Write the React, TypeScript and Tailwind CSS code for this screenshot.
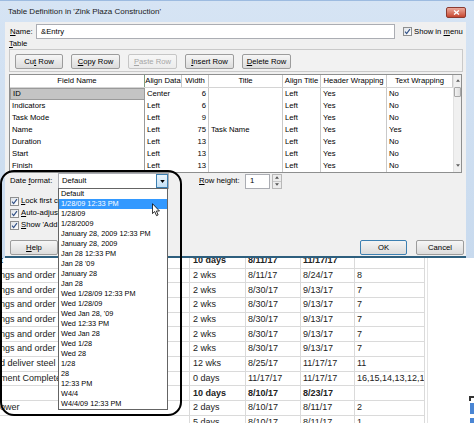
import React from "react";

const ui = "font-['Liberation_Sans',Arial,sans-serif]";

const fields = [
  ["ID", "Center", "6", "", "Left", "Yes", "No"],
  ["Indicators", "Left", "6", "", "Left", "Yes", "No"],
  ["Task Mode", "Left", "9", "", "Left", "Yes", "No"],
  ["Name", "Left", "75", "Task Name", "Left", "Yes", "Yes"],
  ["Duration", "Left", "13", "", "Left", "Yes", "No"],
  ["Start", "Left", "13", "", "Left", "Yes", "No"],
  ["Finish", "Left", "13", "", "Left", "Yes", "No"],
];

const formats = [
  "Default",
  "1/28/09 12:33 PM",
  "1/28/09",
  "1/28/2009",
  "January 28, 2009 12:33 PM",
  "January 28, 2009",
  "Jan 28 12:33 PM",
  "Jan 28 '09",
  "January 28",
  "Jan 28",
  "Wed 1/28/09 12:33 PM",
  "Wed 1/28/09",
  "Wed Jan 28, '09",
  "Wed 12:33 PM",
  "Wed Jan 28",
  "Wed 1/28",
  "Wed 28",
  "1/28",
  "28",
  "12:33 PM",
  "W4/4",
  "W4/4/09 12:33 PM",
];

const bgRows = [
  { name: "t", dur: "10 days", start: "8/11/17", fin: "11/17/17", pred: "", bold: true },
  { name: "ngs and order steel shop drawings", dur: "2 wks", start: "8/11/17", fin: "8/24/17", pred: "8" },
  { name: "ngs and order steel shop drawings", dur: "2 wks", start: "8/30/17", fin: "9/13/17", pred: "7" },
  { name: "ngs and order steel shop drawings", dur: "2 wks", start: "8/30/17", fin: "9/13/17", pred: "7" },
  { name: "ngs and order steel shop drawings", dur: "2 wks", start: "8/30/17", fin: "9/13/17", pred: "7" },
  { name: "ngs and order steel shop drawings", dur: "2 wks", start: "8/30/17", fin: "9/13/17", pred: "7" },
  { name: "ngs and order steel shop drawings", dur: "2 wks", start: "8/30/17", fin: "9/13/17", pred: "7" },
  { name: "d deliver steel", dur: "12 wks", start: "8/25/17", fin: "11/17/17", pred: "11" },
  { name: "ment Complete", dur: "0 days", start: "11/17/17", fin: "11/17/17", pred: "16,15,14,13,12,11" },
  { name: "", dur: "10 days", start: "8/10/17", fin: "8/23/17", pred: "", bold: true, mark: "corner" },
  { name: "ower", dur: "2 days", start: "8/10/17", fin: "8/11/17", pred: "2", mark: "bar" },
  { name: "", dur: "5 days", start: "8/10/17", fin: "8/11/17", pred: "1", mark: "bar" },
];

function U({ children }: { children: React.ReactNode }) {
  return <span className="underline underline-offset-[1px]">{children}</span>;
}

function Btn({
  children,
  w,
  disabled,
  primary,
}: {
  children: React.ReactNode;
  w: string;
  disabled?: boolean;
  primary?: boolean;
}) {
  const tone = disabled
    ? "border-[#c6c6c6] text-[#a6a6a6] from-[#f7f7f7] to-[#ececec]"
    : primary
    ? "border-[#3c7fb1] text-black from-[#f4f4f4] to-[#dcdcdc]"
    : "border-[#9c9c9c] text-black from-[#f6f6f6] to-[#dcdcdc]";
  return (
    <div
      className={`${w} h-[15px] shrink-0 flex items-center justify-center rounded-[2px] border bg-linear-to-b text-[7.7px] ${tone}`}
    >
      <span className="whitespace-pre">{children}</span>
    </div>
  );
}

function Check() {
  return (
    <div className="w-[9px] h-[9px] shrink-0 border border-[#8e8f8f] bg-linear-to-br from-[#dfe3e8] to-white flex items-center justify-center">
      <svg viewBox="0 0 8 8" className="w-[7px] h-[7px]">
        <path d="M1.2 4.2 L3 6.3 L6.8 1.2" fill="none" stroke="#2f4f86" strokeWidth="1.3" />
      </svg>
    </div>
  );
}

export default function App() {
  return (
    <div className={`relative w-[474px] h-[423px] overflow-hidden bg-white text-black leading-none ${ui}`}>
      {/* Project sheet behind the dialog */}
      <div className="pt-[254px] text-[9px] text-[#222]">
        {bgRows.map((r, i) => (
          <div key={i} className={`flex h-[14.7px] ${r.bold ? "font-bold" : ""}`}>
            <div className="w-[190px] shrink-0 border-b border-r border-[#dadada] overflow-hidden whitespace-nowrap flex items-center">
              {r.name}
            </div>
            <div className="w-[56px] shrink-0 border-b border-r border-[#dadada] pl-[3px] flex items-center">{r.dur}</div>
            <div className="w-[55px] shrink-0 border-b border-r border-[#dadada] pl-[2px] flex items-center">{r.start}</div>
            <div className="w-[54px] shrink-0 border-b border-r border-[#dadada] pl-[2px] flex items-center">{r.fin}</div>
            <div className="w-[70px] shrink-0 border-b border-r border-[#dadada] pl-[2px] overflow-hidden whitespace-nowrap flex items-center">
              {r.pred}
            </div>
            <div className="flex-1 ml-[2px] border-l border-[#e4e4e4] flex justify-end">
              {r.mark === "corner" && <div className="self-end w-[5px] h-[5px] border-l-2 border-t-2 border-[#333]" />}
              {r.mark === "bar" && <div className="w-[4px] my-[2px] bg-[#4a86d4]" />}
            </div>
          </div>
        ))}
      </div>

      {/* Table Definition dialog */}
      <div className="absolute left-0 top-0 w-[474px] h-[258px] flex flex-col pl-[5px] pr-[8px] bg-linear-to-b from-[#d6e4f4] to-[#c8daee] border-t border-[#9dbbe0]">
        <div className="h-[21px] shrink-0 flex items-center justify-between">
          <span className="pl-[3px] text-[8px] text-[#1b1b1b]">Table Definition in 'Zink Plaza Construction'</span>
          <div className="w-[20px] h-[11px] mt-[2px] rounded-[2px] border border-[#8b3b30] bg-linear-to-b from-[#eaa99b] to-[#c6452f] flex items-center justify-center">
            <svg viewBox="0 0 8 6" className="w-[7px] h-[5px]">
              <path d="M1 0.5 L7 5.5 M7 0.5 L1 5.5" stroke="white" strokeWidth="1.5" />
            </svg>
          </div>
        </div>

        <div className="flex-1 flex flex-col bg-[#f0f0f0] border-b-2 border-[#2e5f7e] text-[7.7px]">
          {/* Name */}
          <div className="mt-[2px] h-[15px] flex items-center">
            <span className="w-[31px] pl-[5px] shrink-0">
              <U>N</U>ame:
            </span>
            <div className="w-[359px] h-[15px] border border-[#abadb3] bg-white flex items-center pl-[4px]">&amp;Entry</div>
            <div className="ml-[8px] flex items-center gap-[2px]">
              <Check />
              <span>
                Show in <U>m</U>enu
              </span>
            </div>
          </div>

          {/* Table label */}
          <div className="h-[10px] flex items-center pl-[4px]">
            <span>
              <U>T</U>able
            </span>
          </div>

          {/* Row buttons */}
          <div className="ml-[4px] mr-[3px] h-[23px] border border-[#c9c9c9] bg-[#f2f2f2] flex items-start gap-[8px] pl-[5px] pt-[4px]">
            <Btn w="w-[48px]">
              Cu<U>t</U> Row
            </Btn>
            <Btn w="w-[49px]">
              <U>C</U>opy Row
            </Btn>
            <Btn w="w-[49px]" disabled>
              <U>P</U>aste Row
            </Btn>
            <Btn w="w-[49px]">
              <U>I</U>nsert Row
            </Btn>
            <Btn w="w-[49px]">
              <U>D</U>elete Row
            </Btn>
          </div>

          {/* Field grid */}
          <div className="mt-[2px] ml-[4px] w-[453px] h-[99px] shrink-0 border border-[#8e8f8f] bg-white flex">
            <div className="flex-1">
              <div className="grid grid-cols-[135px_37px_27px_74px_38px_66px_66px] h-[13px] border-b border-[#d4d4d4]">
                {["Field Name", "Align Data", "Width", "Title", "Align Title", "Header Wrapping", "Text Wrapping"].map(
                  (h, i) => (
                    <div
                      key={h}
                      className={`flex items-center justify-center border-r whitespace-nowrap overflow-hidden ${
                        i === 0 ? "border-[#7e9c82]" : "border-[#c9c9c9]"
                      }`}
                    >
                      {h}
                    </div>
                  )
                )}
              </div>
              {fields.map((f, r) => (
                <div key={f[0]} className="grid grid-cols-[135px_37px_27px_74px_38px_66px_66px] h-[12px]">
                  <div
                    className={`flex items-center pl-[2px] border-r border-[#9a9a9a] ${
                      r === 0 ? "bg-[#c4c4c4] border border-[#4f7d58]" : ""
                    }`}
                  >
                    {f[0]}
                  </div>
                  <div className="flex items-center pl-[2px]">{f[1]}</div>
                  <div className="flex items-center justify-end pr-[2px] border-r border-[#c9c9c9]">{f[2]}</div>
                  <div className="flex items-center pl-[2px] border-r border-[#c9c9c9]">{f[3]}</div>
                  <div className="flex items-center pl-[2px] border-r border-[#c9c9c9]">{f[4]}</div>
                  <div className="flex items-center pl-[2px] border-r border-[#c9c9c9]">{f[5]}</div>
                  <div className="flex items-center pl-[2px]">{f[6]}</div>
                </div>
              ))}
            </div>
            <div className="w-[8px] shrink-0 bg-[#f0f0f0] border-l border-[#e2e2e2] flex flex-col items-center">
              <svg viewBox="0 0 6 4" className="w-[4px] h-[3px] mt-[4px]">
                <path d="M0 4 L3 0 L6 4 Z" fill="#606060" />
              </svg>
              <div className="mt-[5px] w-[7px] h-[10px] rounded-[1px] border border-[#a7a7a7] bg-linear-to-r from-[#f2f2f2] to-[#dcdcdc]" />
              <div className="flex-1" />
              <svg viewBox="0 0 6 4" className="w-[4px] h-[3px] mb-[5px]">
                <path d="M0 0 L3 4 L6 0 Z" fill="#606060" />
              </svg>
            </div>
          </div>

          {/* Date format / row height */}
          <div className="h-[16px] flex items-center">
            <span className="w-[53px] pl-[5px] shrink-0">
              Date <U>f</U>ormat:
            </span>
            <div className="w-[111px] h-[16px] border border-[#abadb3] bg-white flex items-center">
              <span className="flex-1 pl-[3px]">Default</span>
              <div className="w-[12px] h-[14px] border border-[#3c7fb1] bg-linear-to-b from-[#eaf4fc] to-[#c4e1f6] flex items-center justify-center">
                <svg viewBox="0 0 6 4" className="w-[5px] h-[3px]">
                  <path d="M0 0 L3 4 L6 0 Z" fill="#000" />
                </svg>
              </div>
            </div>
            <span className="ml-[30px] w-[46px] shrink-0">
              <U>R</U>ow height:
            </span>
            <div className="w-[25px] h-[15px] border border-[#abadb3] bg-white flex items-center pl-[4px]">1</div>
            <div className="ml-[2px] w-[10px] h-[15px] flex flex-col border border-[#b8b8b8] bg-[#ececec]">
              <div className="flex-1 flex items-center justify-center border-b border-[#c8c8c8]">
                <svg viewBox="0 0 6 4" className="w-[4px] h-[3px]">
                  <path d="M0 4 L3 0 L6 4 Z" fill="#555" />
                </svg>
              </div>
              <div className="flex-1 flex items-center justify-center">
                <svg viewBox="0 0 6 4" className="w-[4px] h-[3px]">
                  <path d="M0 0 L3 4 L6 0 Z" fill="#555" />
                </svg>
              </div>
            </div>
          </div>

          {/* Options */}
          <div className="mt-[6px] flex flex-col pl-[5px]">
            <div className="h-[12px] flex items-center gap-[2px] whitespace-nowrap">
              <Check />
              <span>
                <U>L</U>ock first column
              </span>
            </div>
            <div className="h-[12px] flex items-center gap-[2px] whitespace-nowrap">
              <Check />
              <span>
                <U>A</U>uto-adjust header row heights
              </span>
            </div>
            <div className="h-[12px] flex items-center gap-[2px] whitespace-nowrap">
              <Check />
              <span>
                <U>S</U>how 'Add New Column' interface
              </span>
            </div>
          </div>

          {/* Bottom buttons */}
          <div className="mt-[9px] flex items-center pl-[5px] pr-[2px]">
            <Btn w="w-[48px]">
              <U>H</U>elp
            </Btn>
            <div className="flex-1" />
            <Btn w="w-[47px]" primary>
              OK
            </Btn>
            <div className="w-[9px]" />
            <Btn w="w-[48px]">Cancel</Btn>
          </div>
        </div>
      </div>

      {/* Open date format list */}
      <div className="absolute left-[58px] top-[188px] w-[110px] border border-[#646464] bg-white text-[7.3px]">
        {formats.map((f, i) => (
          <div
            key={f}
            className={`h-[10px] flex items-center pl-[2px] whitespace-nowrap ${
              i === 1 ? "bg-[#3399ff] text-white" : "text-black"
            }`}
          >
            {f}
          </div>
        ))}
      </div>

      {/* Mouse pointer */}
      <svg viewBox="0 0 10 15" className="absolute left-[152px] top-[203px] w-[9px] h-[14px]">
        <path d="M0.5 0.5 L0.5 11.5 L3 9.2 L5 13.8 L6.8 13 L4.9 8.6 L8.3 8.6 Z" fill="white" stroke="black" strokeWidth="0.9" />
      </svg>

      {/* Annotation outline */}
      <div className="absolute left-0 top-[170px] w-[182px] h-[246px] border-[2.5px] border-black rounded-[14px]" />
    </div>
  );
}
